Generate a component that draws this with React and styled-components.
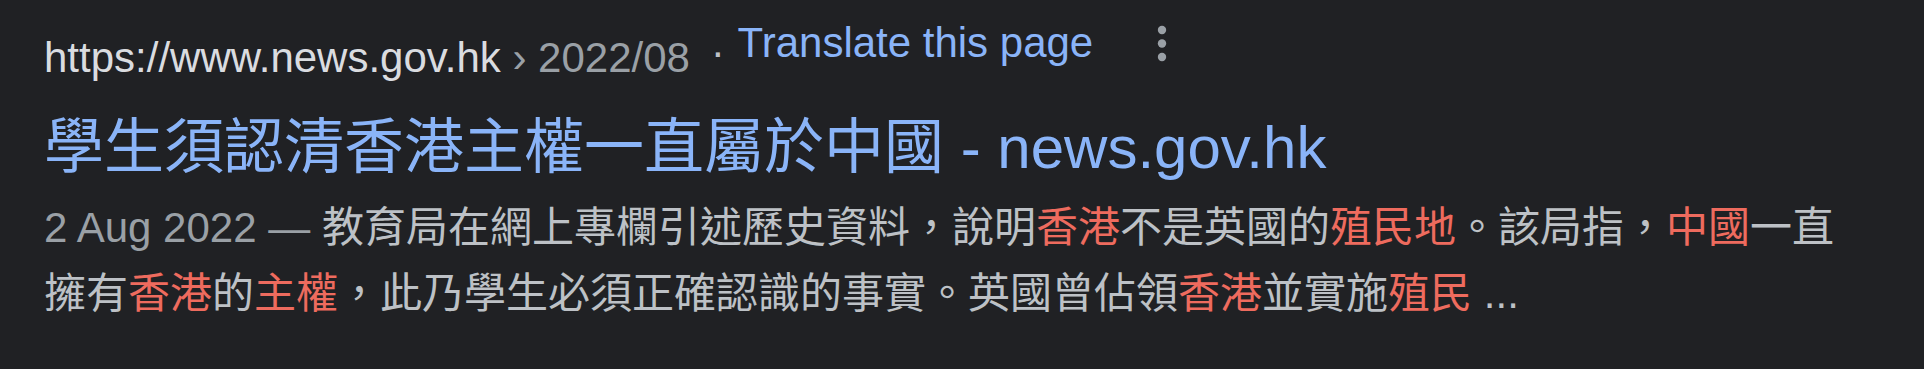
import React from 'react';
import styled, { createGlobalStyle } from 'styled-components';

const GlobalStyle = createGlobalStyle`
  html, body {
    margin: 0;
    padding: 0;
    background: #202124;
  }
  body {
    font-family: "Liberation Sans", Arial, "Noto Sans CJK TC", sans-serif;
  }
`;

const Result = styled.div`
  padding: 16px 0 0 44px;
  width: 1812px;
`;

const UrlRow = styled.div`
  display: flex;
  align-items: flex-start;
  white-space: nowrap;
`;

const Cite = styled.cite`
  font-style: normal;
  font-size: 42px;
  line-height: 54px;
  margin-top: 15px;
  color: #dadce0;
`;

const Path = styled.span`
  color: #9aa0a6;
`;

const Translate = styled.span`
  font-size: 42px;
  line-height: 54px;
  color: #9aa0a6;
`;

const Sep = styled.span`
  margin: 0 14px 0 22px;
  color: #bdc1c6;
`;

const TranslateLink = styled.a`
  color: #8ab4f8;
  text-decoration: none;
  cursor: pointer;
`;

const MoreButton = styled.svg`
  margin-left: 61px;
  flex: none;
`;

const Title = styled.h3`
  margin: 24px 0 0;
  font-weight: normal;
  font-size: 60px;
  line-height: 78px;
  color: #8ab4f8;
  white-space: nowrap;
`;

const Snippet = styled.div`
  margin-top: 8px;
  font-size: 42px;
  line-height: 66px;
  color: #bdc1c6;
`;

const DateText = styled.span`
  color: #9aa0a6;
`;

const Em = styled.em`
  font-style: normal;
  color: #ee6b5e;
`;

export default function App() {
  return (
    <>
      <GlobalStyle />
      <Result>
        <UrlRow>
          <Cite>
            https://www.news.gov.hk<Path> › 2022/08</Path>
          </Cite>
          <Translate>
            <Sep>.</Sep>
            <TranslateLink>Translate this page</TranslateLink>
          </Translate>
          <MoreButton width="16" height="52" viewBox="0 0 16 52">
            <circle cx="8" cy="14" r="4.2" fill="#9aa0a6" />
            <circle cx="8" cy="27.5" r="4.2" fill="#9aa0a6" />
            <circle cx="8" cy="41" r="4.2" fill="#9aa0a6" />
          </MoreButton>
        </UrlRow>
        <Title>學生須認清香港主權一直屬於中國 - news.gov.hk</Title>
        <Snippet>
          <DateText>2 Aug 2022 — </DateText>
          教育局在網上專欄引述歷史資料，說明<Em>香港</Em>不是英國的<Em>殖民地</Em>。該局指，<Em>中國</Em>一直擁有<Em>香港</Em>的<Em>主權</Em>，此乃學生必須正確認識的事實。英國曾佔領<Em>香港</Em>並實施<Em>殖民</Em> ...
        </Snippet>
      </Result>
    </>
  );
}
